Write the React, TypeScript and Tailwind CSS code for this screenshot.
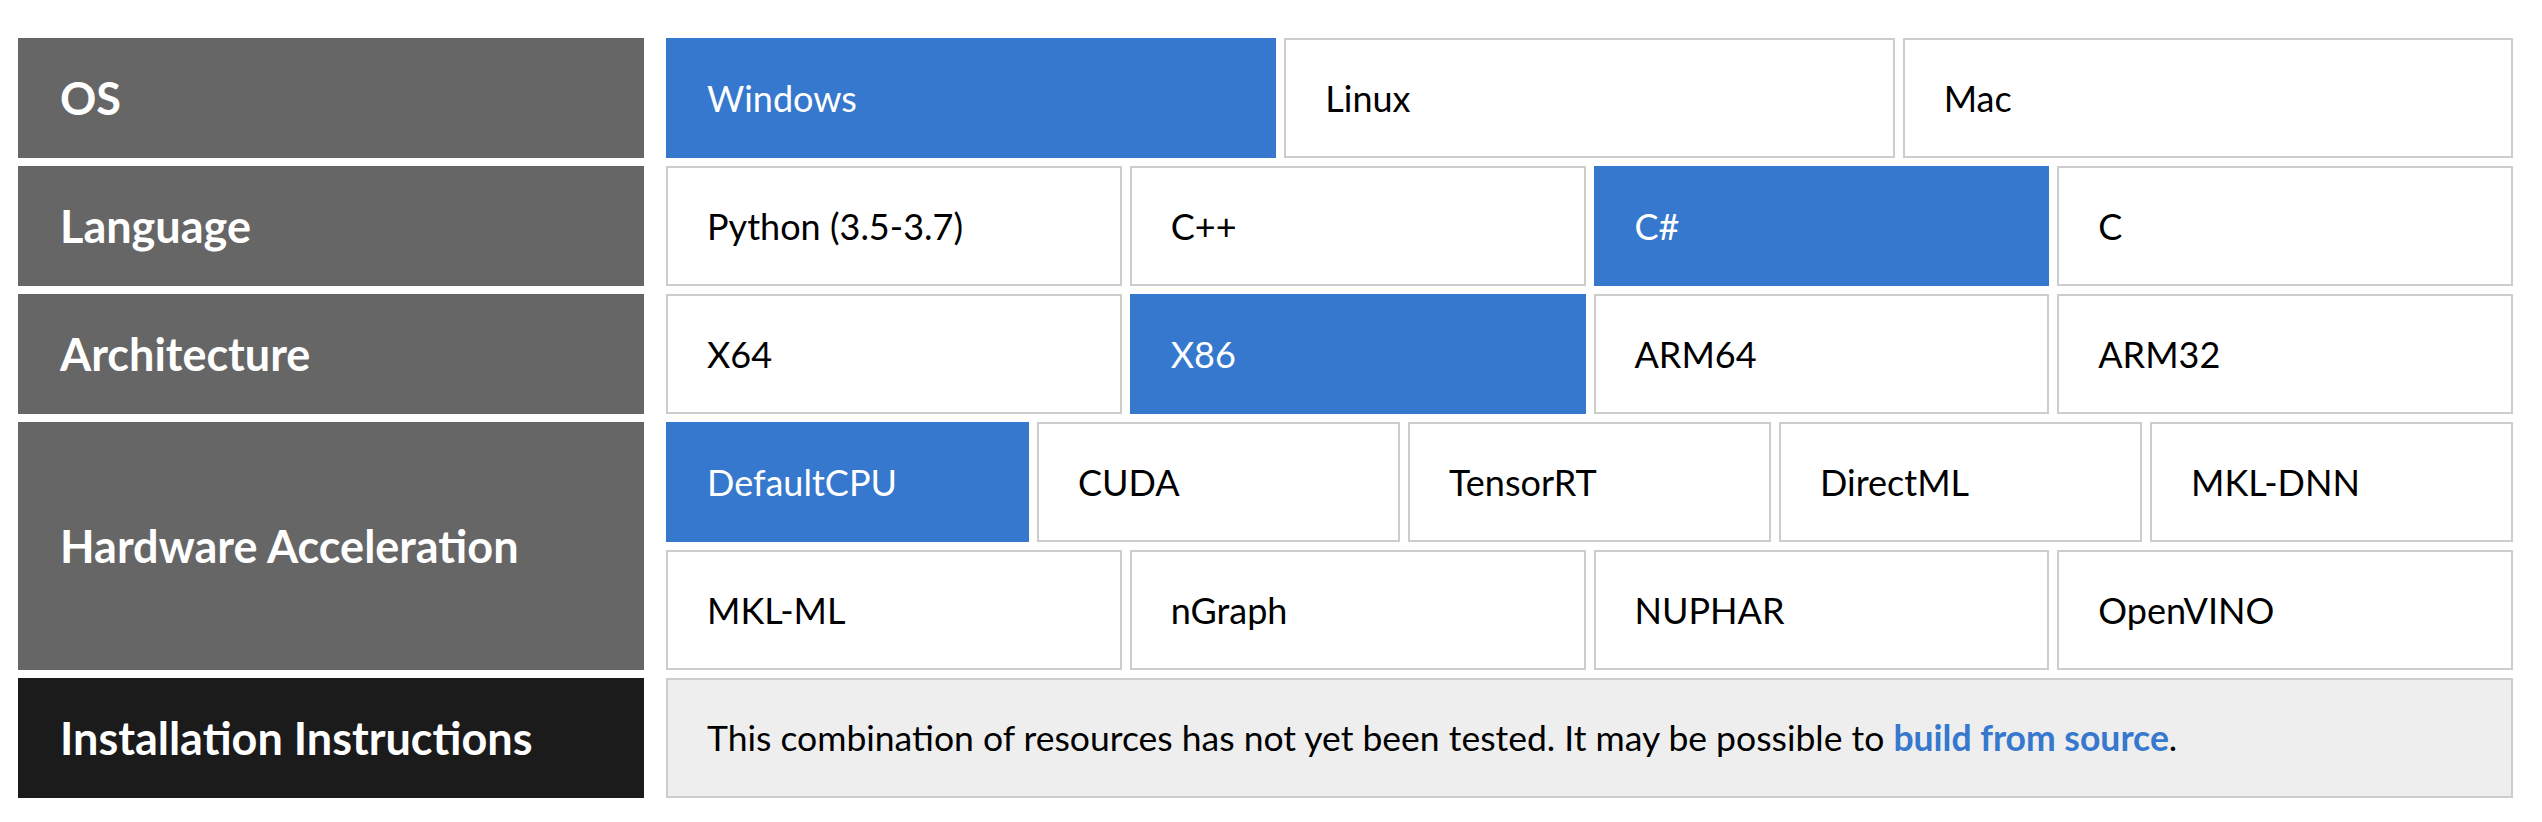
const FONT = { fontFamily: "Lato, 'Open Sans', sans-serif" };

type Opt = { label: string; selected?: boolean };

const rows: { title: string; cols: string; options: Opt[] }[] = [
  {
    title: "OS",
    cols: "grid-cols-3",
    options: [{ label: "Windows", selected: true }, { label: "Linux" }, { label: "Mac" }],
  },
  {
    title: "Language",
    cols: "grid-cols-4",
    options: [
      { label: "Python (3.5-3.7)" },
      { label: "C++" },
      { label: "C#", selected: true },
      { label: "C" },
    ],
  },
  {
    title: "Architecture",
    cols: "grid-cols-4",
    options: [
      { label: "X64" },
      { label: "X86", selected: true },
      { label: "ARM64" },
      { label: "ARM32" },
    ],
  },
];

const hwTop: Opt[] = [
  { label: "DefaultCPU", selected: true },
  { label: "CUDA" },
  { label: "TensorRT" },
  { label: "DirectML" },
  { label: "MKL-DNN" },
];

const hwBottom: Opt[] = [
  { label: "MKL-ML" },
  { label: "nGraph" },
  { label: "NUPHAR" },
  { label: "OpenVINO" },
];

function Option({ label, selected }: Opt) {
  return (
    <div
      className={`h-[120px] flex items-center pl-[39px] border-2 text-[36px] leading-none ${
        selected
          ? "bg-[#3578cd] border-[#3578cd] text-white"
          : "bg-white border-[#cccccc] text-black"
      }`}
    >
      {label}
    </div>
  );
}

function Label({ title, dark, tall }: { title: string; dark?: boolean; tall?: boolean }) {
  return (
    <div
      className={`w-[626px] shrink-0 flex items-center pl-[42px] text-white font-bold text-[45px] leading-none ${
        dark ? "bg-[#1b1b1b]" : "bg-[#666666]"
      } ${tall ? "h-[248px]" : "h-[120px]"}`}
    >
      {title}
    </div>
  );
}

export default function App() {
  return (
    <div className="w-full min-h-[822px] bg-white pt-[38px] pl-[18px] pr-[29px]" style={FONT}>
      <div className="flex flex-col gap-[8px]">
        {rows.map((row) => (
          <div key={row.title} className="flex gap-[22px]">
            <Label title={row.title} />
            <div className={`flex-1 grid ${row.cols} gap-[8px]`}>
              {row.options.map((o) => (
                <Option key={o.label} {...o} />
              ))}
            </div>
          </div>
        ))}

        {/* Hardware acceleration spans two option rows */}
        <div className="flex gap-[22px]">
          <Label title="Hardware Acceleration" tall />
          <div className="flex-1 flex flex-col gap-[8px]">
            <div className="grid grid-cols-5 gap-[8px]">
              {hwTop.map((o) => (
                <Option key={o.label} {...o} />
              ))}
            </div>
            <div className="grid grid-cols-4 gap-[8px]">
              {hwBottom.map((o) => (
                <Option key={o.label} {...o} />
              ))}
            </div>
          </div>
        </div>

        <div className="flex gap-[22px]">
          <Label title="Installation Instructions" dark />
          <div className="flex-1 h-[120px] flex items-center pl-[39px] bg-[#eeeeee] border-2 border-[#cccccc] text-[35.5px] leading-none text-black">
            <p>
              This combination of resources has not yet been tested. It may be possible to{" "}
              <a href="#" className="font-bold text-[#3578cd]">
                build from source
              </a>
              .
            </p>
          </div>
        </div>
      </div>
    </div>
  );
}
